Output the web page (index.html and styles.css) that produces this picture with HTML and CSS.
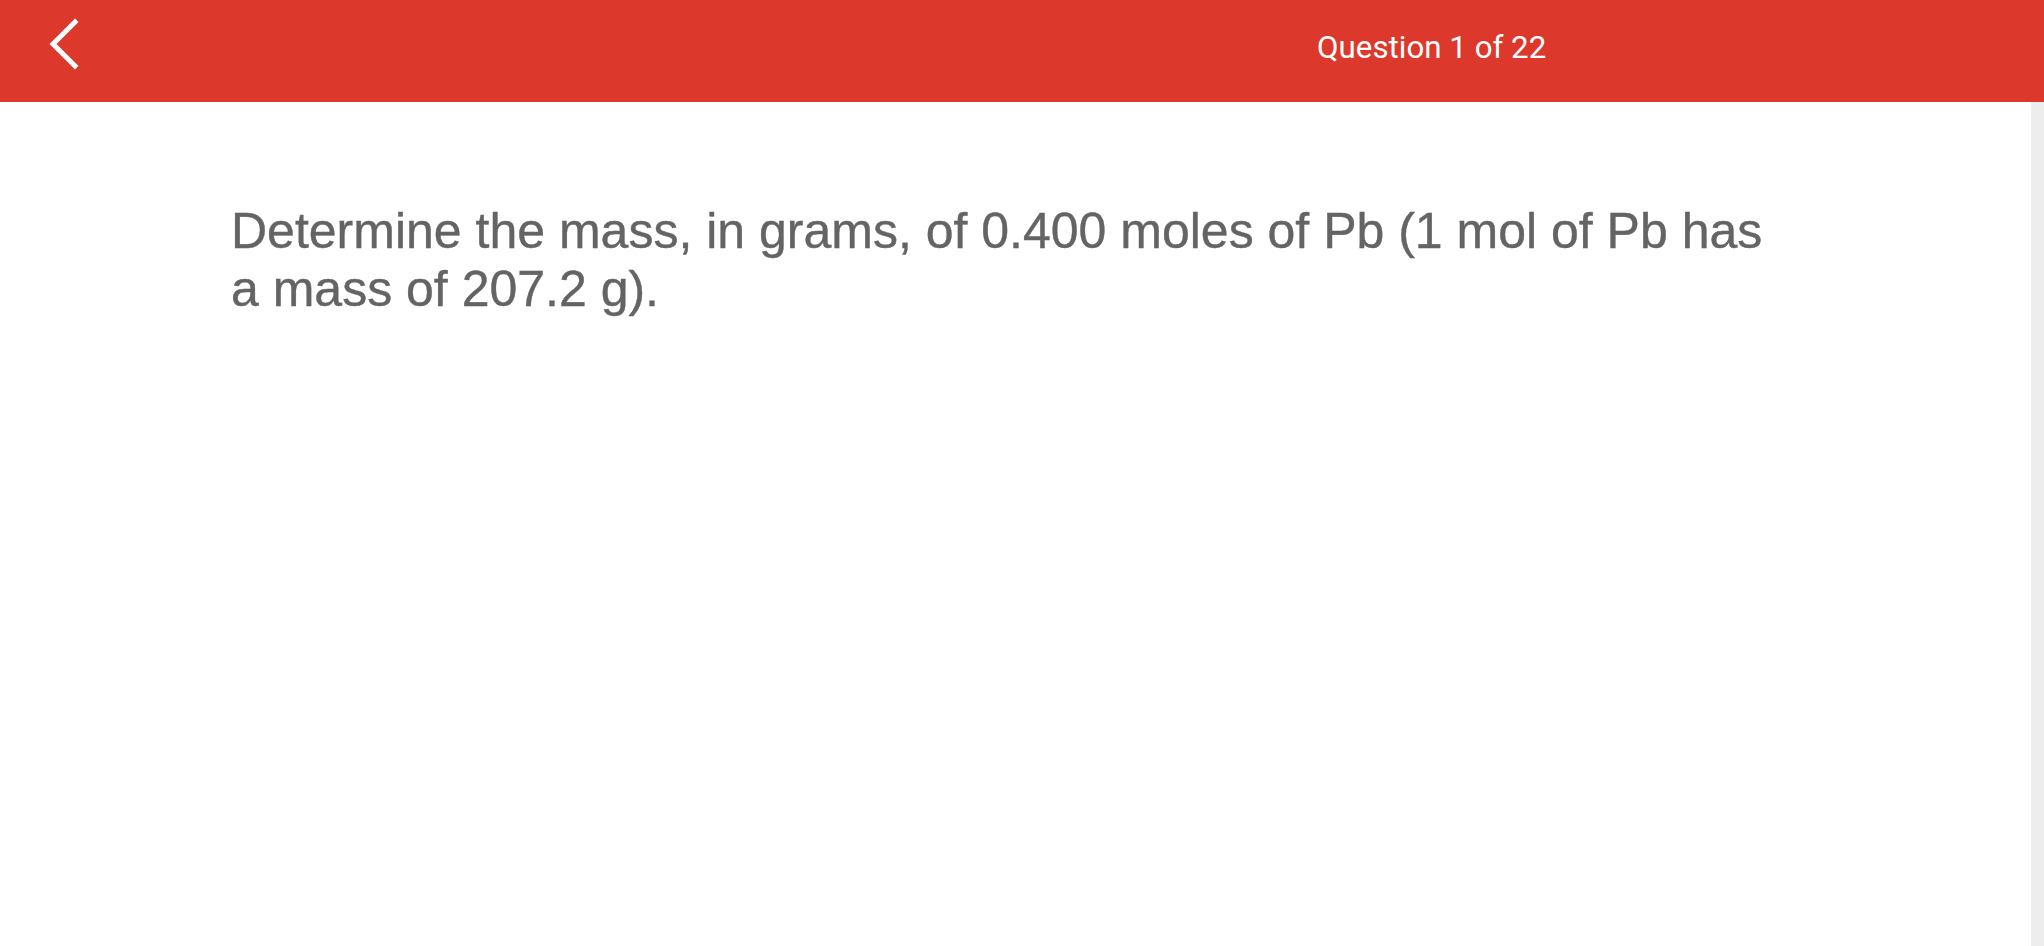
FILE: index.html
```html
<!DOCTYPE html>
<html lang="en">
<head>
    <meta charset="UTF-8">
    <meta name="viewport" content="width=device-width, initial-scale=1.0">
    <title>Question 1 of 22</title>
    <link rel="stylesheet" href="styles.css">
</head>
<body>

<header class="topbar">
    <a href="#" class="back-btn" aria-label="Back">
        <svg width="32" height="52" viewBox="0 0 32 52">
            <path d="M27 4 L5 26 L27 48" fill="none" stroke="#fff" stroke-width="5" stroke-linecap="square"/>
        </svg>
    </a>
    <div class="q-count">Question 1 of 22</div>
</header>

<div class="page">
    <main class="content">
        <p class="question">Determine the mass, in grams, of 0.400 moles of Pb (1 mol of Pb has a mass of 207.2 g).</p>
    </main>
    <div class="scroll-track"></div>
</div>

</body>
</html>
```

FILE: styles.css
```css
/* Basic reset */
* {
    margin: 0;
    padding: 0;
    box-sizing: border-box;
}

html, body {
    height: 100%;
}

body {
    font-family: "Liberation Sans", Arial, sans-serif;
    background: #fff;
    display: flex;
    flex-direction: column;
    overflow: hidden;
}

.topbar {
    height: 102px;
    flex: none;
    background-color: #dc382c;
    display: flex;
    align-items: center;
    padding-left: 48px;
}

.back-btn {
    display: flex;
    width: 32px;
    height: 52px;
    margin-top: -14px;
}

.q-count {
    margin-left: 1237px;
    font-family: Roboto, "Liberation Sans", sans-serif;
    font-size: 31.3px;
    color: #fff;
    margin-top: -7px;
}

.page {
    flex: 1;
    display: flex;
}

.content {
    flex: 1;
    padding: 100px 0 0 231px;
}

.question {
    max-width: 1550px;
    font-size: 50px;
    line-height: 58px;
    color: #646464;
    -webkit-text-stroke: 0.4px #646464;
}

.scroll-track {
    width: 13px;
    flex: none;
    background: #ededed;
}
```
